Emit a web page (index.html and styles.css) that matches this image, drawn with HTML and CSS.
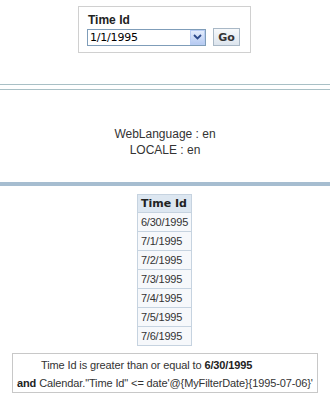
FILE: index.html
```html
<!DOCTYPE html>
<html>
<head>
<meta charset="utf-8">
<link rel="stylesheet" href="styles.css">
</head>
<body>
<div class="prompt-wrap">
  <div class="prompt">
    <div class="prompt-label">Time Id</div>
    <div class="prompt-row">
      <div class="select">
        <span class="select-text">1/1/1995</span>
        <span class="select-btn">
          <svg width="9" height="6" viewBox="0 0 9 6"><path d="M1 1 L4.5 4.5 L8 1" fill="none" stroke="#2d4a8a" stroke-width="1.8"/></svg>
        </span>
      </div>
      <button class="go">Go</button>
    </div>
  </div>
</div>
<div class="rule-thin first"></div>
<div class="rule-thin second"></div>
<div class="lang">
  <div>WebLanguage : en</div>
  <div>LOCALE : en</div>
</div>
<div class="rule-thick"></div>
<div class="table-wrap">
  <table class="data">
    <thead><tr><th>Time Id</th></tr></thead>
    <tbody>
      <tr><td>6/30/1995</td></tr>
      <tr><td>7/1/1995</td></tr>
      <tr><td>7/2/1995</td></tr>
      <tr><td>7/3/1995</td></tr>
      <tr><td>7/4/1995</td></tr>
      <tr><td>7/5/1995</td></tr>
      <tr><td>7/6/1995</td></tr>
    </tbody>
  </table>
</div>
<div class="filter-wrap">
  <div class="filter">
    <div class="filter-line first-line">Time Id is greater than or equal to <b>6/30/1995</b></div>
    <div class="filter-line"><b class="and">and</b> Calendar."Time Id" &lt;= date'@{MyFilterDate}{1995-07-06}'</div>
  </div>
</div>
</body>
</html>
```
FILE: styles.css
```css
html, body {
  margin: 0;
  padding: 0;
  background: #ffffff;
  font-family: "Liberation Sans", Arial, sans-serif;
  color: #333333;
}
.prompt-wrap {
  display: flex;
  justify-content: center;
  padding-top: 6px;
  padding-right: 1px;
}
.prompt {
  width: 163px;
  height: 38px;
  border: 1px solid #d0d0d0;
  padding: 6px 0 1px 8px;
  box-sizing: content-box;
}
.prompt-label {
  font-weight: bold;
  font-size: 12px;
  color: #222;
  line-height: 14px;
  margin-left: 1px;
}
.prompt-row {
  display: flex;
  align-items: center;
  gap: 7px;
  margin-top: 1px;
}
.select {
  width: 119px;
  height: 17px;
  border: 1px solid #7f9db9;
  display: flex;
  align-items: center;
  justify-content: space-between;
  box-sizing: border-box;
  background: #fff;
}
.select-text {
  font-size: 11px;
  color: #000;
  padding-left: 2px;
  font-family: "DejaVu Sans", Tahoma, sans-serif;
  letter-spacing: -0.2px;
}
.select-btn {
  width: 15px;
  height: 15px;
  background: linear-gradient(#e3ecfc, #b7cbf2);
  border: 1px solid #b9cdf3;
  box-sizing: border-box;
  display: flex;
  align-items: center;
  justify-content: center;
}
.go {
  width: 27px;
  height: 18px;
  padding: 0;
  font-family: "DejaVu Sans", Tahoma, sans-serif;
  font-weight: bold;
  font-size: 11px;
  color: #333;
  background: linear-gradient(#f7f9fb, #dce4ed);
  border: 1px solid #a9b8c6;
  border-radius: 0;
}
.rule-thin {
  height: 1px;
  background: #a9c0c6;
}
.rule-thin.first { margin-top: 31px; }
.rule-thin.second { margin-top: 4px; }
.lang {
  text-align: center;
  font-size: 12px;
  line-height: 16px;
  color: #333;
  padding-top: 36px;
  height: 56px;
}
.rule-thick {
  height: 4px;
  background: #a6bdd0;
}
.table-wrap {
  display: flex;
  justify-content: center;
  padding-top: 8px;
  padding-right: 1px;
}
.data {
  border-collapse: collapse;
  font-size: 11px;
}
.data th {
  background: #dde7f1;
  color: #222;
  font-family: "DejaVu Sans", Tahoma, sans-serif;
  font-weight: bold;
  font-size: 11px;
  text-align: left;
  height: 17px;
  padding: 0 3px;
  border: 1px solid #c6d3e0;
}
.data td {
  background: #f6f8fb;
  border: 1px solid #c6d3e0;
  height: 18px;
  padding: 0 3px;
  color: #333;
  letter-spacing: -0.2px;
}
.filter-wrap {
  display: flex;
  justify-content: center;
  padding-top: 7px;
}
.filter {
  width: 304px;
  height: 38px;
  border: 1px solid #c8c8c8;
  font-size: 11px;
  color: #333;
  letter-spacing: -0.12px;
}
.filter-line {
  line-height: 18px;
  padding-left: 4px;
  white-space: nowrap;
}
.first-line { padding-left: 28px; margin-top: 2px; }
.filter b { color: #222; }
```
